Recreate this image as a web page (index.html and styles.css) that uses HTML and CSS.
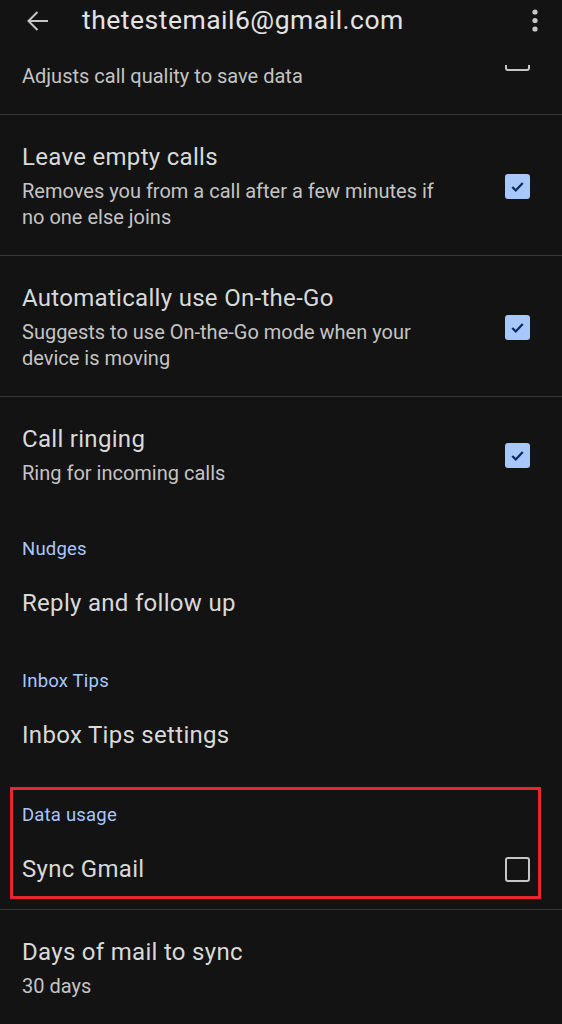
FILE: index.html
```html
<!DOCTYPE html>
<html lang="en">
<head>
    <meta charset="UTF-8">
    <meta name="viewport" content="width=device-width, initial-scale=1.0">
    <title>Settings</title>
    <link rel="stylesheet" href="styles.css">
</head>
<body>
    <header class="appbar">
        <svg class="back" width="26" height="26" viewBox="0 0 26 26">
            <path d="M23 13H3.5M12.5 4L3.5 13l9 9" fill="none" stroke="#c4c7c5" stroke-width="2"/>
        </svg>
        <h1 class="appbar-title">thetestemail6@gmail.com</h1>
        <svg class="more" width="10" height="26" viewBox="0 0 10 26">
            <circle cx="5" cy="5" r="2.6" fill="#c4c7c5"/>
            <circle cx="5" cy="13.5" r="2.6" fill="#c4c7c5"/>
            <circle cx="5" cy="22" r="2.6" fill="#c4c7c5"/>
        </svg>
    </header>

    <main class="settings">
        <!-- row scrolled under the app bar, only its summary shows -->
        <div class="row">
            <div class="text">
                <div class="title-gap"></div>
                <div class="summary">Adjusts call quality to save data</div>
            </div>
            <span class="checkbox"></span>
        </div>

        <div class="row divided">
            <div class="text">
                <div class="title">Leave empty calls</div>
                <div class="summary">Removes you from a call after a few minutes if no one else joins</div>
            </div>
            <span class="checkbox checked">
                <svg viewBox="0 0 24 24"><path d="M6 12.5l4 4 8-8.5" fill="none" stroke="#0a2c60" stroke-width="2.6"/></svg>
            </span>
        </div>

        <div class="row divided">
            <div class="text">
                <div class="title">Automatically use On-the-Go</div>
                <div class="summary">Suggests to use On-the-Go mode when your device is moving</div>
            </div>
            <span class="checkbox checked">
                <svg viewBox="0 0 24 24"><path d="M6 12.5l4 4 8-8.5" fill="none" stroke="#0a2c60" stroke-width="2.6"/></svg>
            </span>
        </div>

        <div class="row divided">
            <div class="text">
                <div class="title">Call ringing</div>
                <div class="summary">Ring for incoming calls</div>
            </div>
            <span class="checkbox checked">
                <svg viewBox="0 0 24 24"><path d="M6 12.5l4 4 8-8.5" fill="none" stroke="#0a2c60" stroke-width="2.6"/></svg>
            </span>
        </div>

        <div class="category">Nudges</div>
        <div class="row">
            <div class="text">
                <div class="title">Reply and follow up</div>
            </div>
        </div>

        <div class="category">Inbox Tips</div>
        <div class="row">
            <div class="text">
                <div class="title">Inbox Tips settings</div>
            </div>
        </div>

        <section class="highlight">
            <div class="category">Data usage</div>
            <div class="row">
                <div class="text">
                    <div class="title">Sync Gmail</div>
                </div>
                <span class="checkbox"></span>
            </div>
        </section>

        <div class="row divided">
            <div class="text">
                <div class="title">Days of mail to sync</div>
                <div class="summary">30 days</div>
            </div>
        </div>
    </main>
</body>
</html>
```

FILE: styles.css
```css
body {
    font-family: Roboto, "Noto Sans", sans-serif;
    margin: 0;
    padding: 0;
    background-color: #131313;
    color: #dedede;
    overflow: hidden;
}
.appbar {
    position: absolute;
    top: 0;
    left: 0;
    right: 0;
    height: 65px;
    background-color: #131313;
    display: flex;
    align-items: flex-start;
    padding: 8px 22px 0 25px;
    box-sizing: border-box;
    z-index: 10;
}
.appbar .back {
    flex-shrink: 0;
}
.appbar-title {
    flex: 1;
    margin: -5px 0 0 31px;
    font-size: 26.5px;
    font-weight: 400;
    letter-spacing: 0.5px;
    line-height: 34px;
    color: #e3e3e3;
}
.appbar .more {
    margin-top: -1px;
}
.settings {
    display: flex;
    flex-direction: column;
}
.row {
    display: flex;
    align-items: center;
    padding: 27px 32px 25px 22px;
}
.row.divided {
    border-top: 1px solid #3a3a3a;
}
.row .text {
    flex: 1;
    padding-right: 60px;
}
.title {
    font-size: 24px;
    letter-spacing: 0.3px;
    line-height: 30px;
    color: #d9d9d9;
}
.title-gap {
    height: 30px;
}
.summary {
    margin-top: 6px;
    font-size: 20px;
    line-height: 26px;
    color: #c4c4c4;
}
.category {
    padding: 26px 22px 0;
    font-size: 18.5px;
    letter-spacing: 0.2px;
    line-height: 24px;
    color: #a8c7fa;
}
.checkbox {
    width: 21px;
    height: 21px;
    border: 2px solid #c4c7c5;
    border-radius: 3px;
    flex-shrink: 0;
}
.checkbox.checked {
    background-color: #a8c7fa;
    border-color: #a8c7fa;
}
.checkbox svg {
    display: block;
    width: 21px;
    height: 21px;
}

/* red outline drawn over the Data usage group */
.highlight {
    position: relative;
    padding-top: 2px;
}
.highlight::after {
    content: "";
    position: absolute;
    top: 12px;
    left: 10px;
    right: 21px;
    bottom: 10px;
    border: 3px solid #e8262c;
    pointer-events: none;
}
```
